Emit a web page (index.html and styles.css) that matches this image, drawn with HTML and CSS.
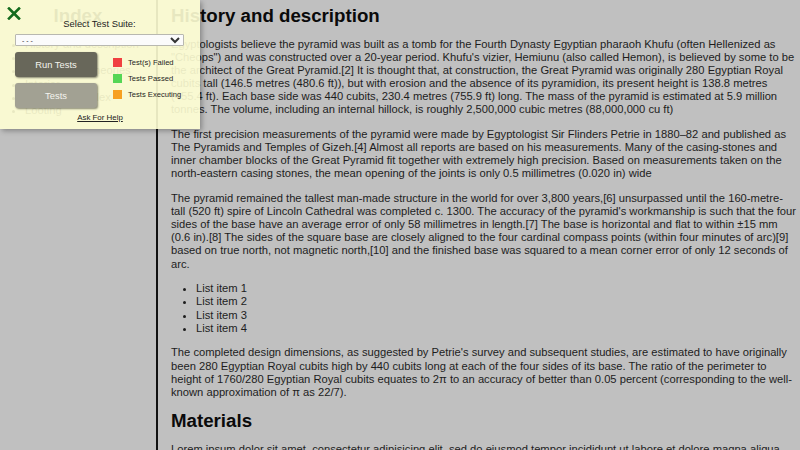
FILE: index.html
```html
<!DOCTYPE html>
<html lang="en">
<head>
<meta charset="utf-8">
<title>Great Pyramid</title>
<link rel="stylesheet" href="styles.css">
</head>
<body>
<div class="layout">
  <nav class="sidebar">
    <h1 class="side-title">Index</h1>
    <ul class="side-list">
      <li>History and description</li>
      <li>Materials</li>
      <li>Construction theories</li>
      <li>Interior</li>
      <li>Pyramid complex</li>
      <li>Looting</li>
    </ul>
  </nav>
  <main class="content">
    <h1 class="title">History and description</h1>
    <p>Egyptologists believe the pyramid was built as a tomb for the Fourth Dynasty Egyptian pharaoh Khufu (often Hellenized as "Cheops") and was constructed over a 20-year period. Khufu's vizier, Hemiunu (also called Hemon), is believed by some to be the architect of the Great Pyramid.[2] It is thought that, at construction, the Great Pyramid was originally 280 Egyptian Royal cubits tall (146.5 metres (480.6 ft)), but with erosion and the absence of its pyramidion, its present height is 138.8 metres (455.4 ft). Each base side was 440 cubits, 230.4 metres (755.9 ft) long. The mass of the pyramid is estimated at 5.9 million tonnes. The volume, including an internal hillock, is roughly 2,500,000 cubic metres (88,000,000 cu ft)</p>
    <p>The first precision measurements of the pyramid were made by Egyptologist Sir Flinders Petrie in 1880–82 and published as The Pyramids and Temples of Gizeh.[4] Almost all reports are based on his measurements. Many of the casing-stones and inner chamber blocks of the Great Pyramid fit together with extremely high precision. Based on measurements taken on the north-eastern casing stones, the mean opening of the joints is only 0.5 millimetres (0.020 in) wide</p>
    <p>The pyramid remained the tallest man-made structure in the world for over 3,800 years,[6] unsurpassed until the 160-metre-tall (520 ft) spire of Lincoln Cathedral was completed c. 1300. The accuracy of the pyramid's workmanship is such that the four sides of the base have an average error of only 58 millimetres in length.[7] The base is horizontal and flat to within ±15 mm (0.6 in).[8] The sides of the square base are closely aligned to the four cardinal compass points (within four minutes of arc)[9] based on true north, not magnetic north,[10] and the finished base was squared to a mean corner error of only 12 seconds of arc.</p>
    <ul class="list">
      <li>List item 1</li>
      <li>List item 2</li>
      <li>List item 3</li>
      <li>List item 4</li>
    </ul>
    <p>The completed design dimensions, as suggested by Petrie's survey and subsequent studies, are estimated to have originally been 280 Egyptian Royal cubits high by 440 cubits long at each of the four sides of its base. The ratio of the perimeter to height of 1760/280 Egyptian Royal cubits equates to 2π to an accuracy of better than 0.05 percent (corresponding to the well-known approximation of π as 22/7).</p>
    <h1 class="title">Materials</h1>
    <p>Lorem ipsum dolor sit amet, consectetur adipisicing elit, sed do eiusmod tempor incididunt ut labore et dolore magna aliqua. Ut enim ad minim veniam, quis nostrud exercitation ullamco laboris nisi ut aliquip ex ea commodo consequat.</p>
  </main>
</div>

<div class="test-panel">
  <button class="close" type="button" aria-label="Close">
    <svg width="14" height="13" viewBox="0 0 14 13"><path d="M2 1.5 L12 11.5 M12 1.5 L2 11.5" stroke="#146b1e" stroke-width="2.6" stroke-linecap="square" fill="none"/></svg>
  </button>
  <div class="suite-label">Select Test Suite:</div>
  <select class="suite-select"><option>- - -</option></select>
  <div class="panel-body">
    <div class="buttons">
      <button class="btn btn-run" type="button">Run Tests</button>
      <button class="btn btn-tests" type="button">Tests</button>
    </div>
    <ul class="legend">
      <li><span class="swatch red"></span>Test(s) Failed</li>
      <li><span class="swatch green"></span>Tests Passed</li>
      <li><span class="swatch orange"></span>Tests Executing</li>
    </ul>
  </div>
  <a class="help" href="#">Ask For Help</a>
</div>
</body>
</html>
```
FILE: styles.css
```css
html, body {
  margin: 0;
  padding: 0;
  height: 100%;
  overflow: hidden;
}
body {
  background: #c0c0c0;
  font-family: "Liberation Sans", Arial, sans-serif;
  font-size: 11.2px;
  color: #1d1d1d;
}
.layout {
  display: flex;
  height: 100vh;
}
.sidebar {
  width: 156px;
  flex: none;
  border-right: 2px solid #111;
}
.side-title {
  text-align: center;
}
.title, .side-title {
  font-size: 18.7px;
  font-weight: bold;
  color: #0a0a0a;
  margin: 5px 0 11px;
  line-height: 21.5px;
}
.side-list, .list {
  margin: 11.4px 0;
  padding-left: 25px;
}
.side-list li, .list li {
  line-height: 13.2px;
}
.content {
  flex: 1;
  padding: 0 4px 0 13px;
  overflow: hidden;
}
.content p {
  margin: 11.4px 0;
  line-height: 13.15px;
}
.content .title + p {
  margin-top: 11px;
}

/* overlay panel */
.test-panel {
  position: absolute;
  top: 0;
  left: 0;
  width: 200px;
  height: 129px;
  background: rgba(255, 255, 212, 0.9);
  box-shadow: 2px 2px 5px rgba(0, 0, 0, 0.3);
  box-sizing: border-box;
  padding: 0 16px 0 15px;
  display: flex;
  flex-direction: column;
  font-family: "Liberation Sans", Arial, sans-serif;
}
.close {
  position: absolute;
  top: 7px;
  left: 7px;
  padding: 0;
  border: 0;
  background: none;
  line-height: 0;
}
.suite-label {
  text-align: center;
  font-size: 9.4px;
  color: #222;
  margin-top: 18px;
  line-height: 11px;
}
.suite-select {
  margin-top: 5px;
  height: 12px;
  width: 169px;
  font-size: 7px;
  padding: 0 2px;
  border: 1px solid #b8b8b0;
  border-radius: 1px;
  background: #fbfbfb;
  color: #333;
  font-family: "Liberation Sans", Arial, sans-serif;
}
.panel-body {
  display: flex;
  margin-top: 6px;
}
.buttons {
  display: flex;
  flex-direction: column;
  gap: 6px;
  width: 82px;
}
.btn {
  height: 25px;
  border: 0;
  border-radius: 3px;
  color: #f4f4ee;
  font-size: 9.4px;
  font-family: "Liberation Sans", Arial, sans-serif;
  box-shadow: 1px 1px 2px rgba(0, 0, 0, 0.45);
  padding: 0;
}
.btn-run {
  background: #68675a;
}
.btn-tests {
  background: #a2a193;
}
.legend {
  list-style: none;
  margin: 6px 0 0 16px;
  padding: 0;
  font-size: 7.6px;
  color: #1e1e1e;
}
.legend li {
  display: flex;
  align-items: center;
  gap: 6px;
  height: 9px;
  margin-bottom: 7px;
}
.swatch {
  width: 9px;
  height: 9px;
  flex: none;
}
.red { background: #f04040; }
.green { background: #55d655; }
.orange { background: #f7a020; }
.help {
  align-self: center;
  margin-top: 5px;
  margin-left: 1px;
  font-size: 7.9px;
  color: #222;
  text-decoration: underline;
}
```
